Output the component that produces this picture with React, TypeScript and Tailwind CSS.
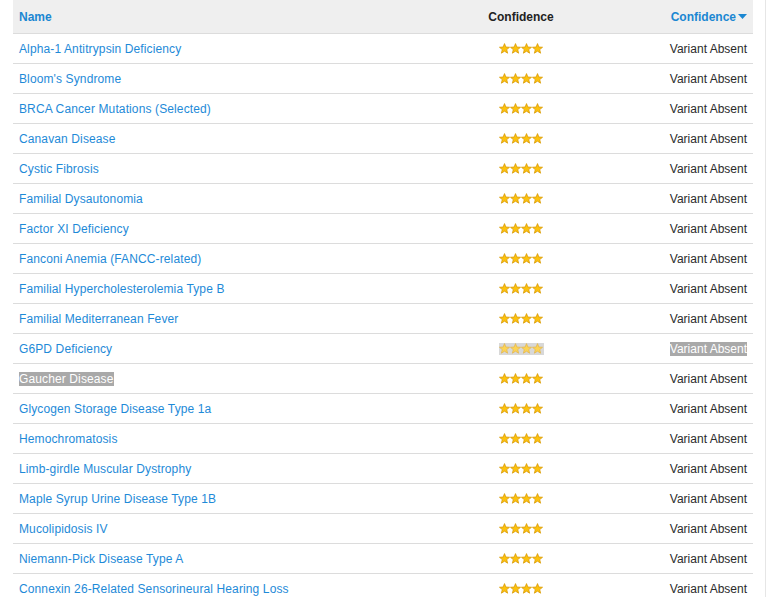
import React from "react";

const rows = [
  "Alpha-1 Antitrypsin Deficiency",
  "Bloom's Syndrome",
  "BRCA Cancer Mutations (Selected)",
  "Canavan Disease",
  "Cystic Fibrosis",
  "Familial Dysautonomia",
  "Factor XI Deficiency",
  "Fanconi Anemia (FANCC-related)",
  "Familial Hypercholesterolemia Type B",
  "Familial Mediterranean Fever",
  "G6PD Deficiency",
  "Gaucher Disease",
  "Glycogen Storage Disease Type 1a",
  "Hemochromatosis",
  "Limb-girdle Muscular Dystrophy",
  "Maple Syrup Urine Disease Type 1B",
  "Mucolipidosis IV",
  "Niemann-Pick Disease Type A",
  "Connexin 26-Related Sensorineural Hearing Loss",
];

function Star({ x }: { x: number }) {
  const cx = x + 5.5;
  const cy = 5.5;
  const pts: string[] = [];
  for (let i = 0; i < 10; i++) {
    const r = i % 2 === 0 ? 5.3 : 2.3;
    const a = (Math.PI / 5) * i - Math.PI / 2;
    pts.push(`${(cx + r * Math.cos(a)).toFixed(2)},${(cy + 0.4 + r * Math.sin(a)).toFixed(2)}`);
  }
  return <polygon points={pts.join(" ")} fill="#fcc20e" stroke="#d99a06" strokeWidth="0.8" strokeLinejoin="round" />;
}

function Stars({ selected }: { selected?: boolean }) {
  return (
    <span className={selected ? "inline-flex bg-[#c8c8c8] opacity-70" : "inline-flex"}>
      <svg width="45" height="12" viewBox="0 0 45 12">
        <Star x={0} />
        <Star x={11} />
        <Star x={22} />
        <Star x={33} />
      </svg>
    </span>
  );
}

export default function App() {
  return (
    <div className="flex bg-white min-h-[597px] h-[597px] overflow-hidden" style={{ fontFamily: '"Liberation Sans", Arial, sans-serif' }}>
      <div className="ml-[13px] w-[740px] text-[12px]">
        <div className="flex items-center h-[34px] bg-[#efefef] border-b border-[#dcdcdc] font-bold">
          <div className="w-[447px] pl-[6px] text-[#1b87d2]">Name</div>
          <div className="w-[122px] text-center text-[#222]">Confidence</div>
          <div className="flex-1 pr-[6px] flex justify-end items-center text-[#1b87d2]">
            Confidence
            <svg width="9" height="6" viewBox="0 0 9 6" className="ml-[2px]">
              <polygon points="0,0 9,0 4.5,5" fill="#1b87d2" />
            </svg>
          </div>
        </div>
        {rows.map((name) => {
          const g6pd = name === "G6PD Deficiency";
          const gaucher = name === "Gaucher Disease";
          return (
            <div key={name} className="flex items-center h-[30px] border-b border-[#dcdcdc] shrink-0">
              <div className="w-[447px] pl-[6px] tracking-[0.12px]">
                <span className={gaucher ? "bg-[#a9a9a9] text-white leading-[14px] inline-block" : "text-[#1e8ad8]"}>{name}</span>
              </div>
              <div className="w-[122px] flex justify-center">
                <Stars selected={g6pd} />
              </div>
              <div className="flex-1 pr-[6px] flex justify-end">
                <span className={g6pd ? "bg-[#a9a9a9] text-white leading-[14px] inline-block" : "text-[#2b2b2b]"}>Variant Absent</span>
              </div>
            </div>
          );
        })}
      </div>
      <div className="ml-[12px] w-px bg-[#e6e6e6] h-full" />
    </div>
  );
}
